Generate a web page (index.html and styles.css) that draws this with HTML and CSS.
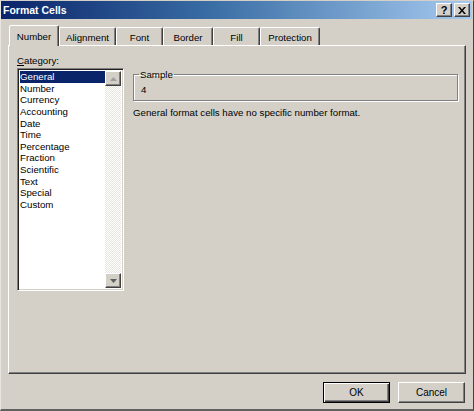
FILE: index.html
```html
<!DOCTYPE html>
<html>
<head>
<meta charset="utf-8">
<link rel="stylesheet" href="styles.css">
</head>
<body>
<div class="window">
  <div class="titlebar">
    <span class="title">Format Cells</span>
    <div class="tbtns">
      <span class="tbtn help">?</span>
      <span class="tbtn close"><svg width="8" height="7" viewBox="0 0 8 7"><path d="M0 0h2l2 2.5L6 0h2L5 3.5 8 7H6L4 4.5 2 7H0l3-3.5z" fill="#000"/></svg></span>
    </div>
  </div>
  <div class="tabs">
    <span class="tab active">Number</span>
    <span class="tab t-align">Alignment</span>
    <span class="tab t-font">Font</span>
    <span class="tab t-border">Border</span>
    <span class="tab t-fill">Fill</span>
    <span class="tab t-prot">Protection</span>
  </div>
  <div class="panel">
    <div class="leftcol">
      <div class="label"><u>C</u>ategory:</div>
      <div class="listbox">
        <div class="items">
          <div class="item sel">General</div>
          <div class="item">Number</div>
          <div class="item">Currency</div>
          <div class="item">Accounting</div>
          <div class="item">Date</div>
          <div class="item">Time</div>
          <div class="item">Percentage</div>
          <div class="item">Fraction</div>
          <div class="item">Scientific</div>
          <div class="item">Text</div>
          <div class="item">Special</div>
          <div class="item">Custom</div>
        </div>
        <div class="scroll">
          <div class="sbtn up"><svg width="7" height="4" viewBox="0 0 7 4"><path d="M3.5 0L7 4H0z" fill="#a0a0a0"/></svg></div>
          <div class="track"></div>
          <div class="sbtn down"><svg width="7" height="4" viewBox="0 0 7 4"><path d="M0 0h7L3.5 4z" fill="#606060"/></svg></div>
        </div>
      </div>
    </div>
    <div class="rightcol">
      <fieldset class="sample">
        <legend>Sample</legend>
        <div class="sval">4</div>
      </fieldset>
      <div class="desc">General format cells have no specific number format.</div>
    </div>
  </div>
  <div class="footer">
    <button class="btn default">OK</button>
    <button class="btn">Cancel</button>
  </div>
</div>
</body>
</html>
```
FILE: styles.css
```css
html, body {
  margin: 0;
  padding: 0;
  background: #d4d0c8;
}
body {
  font-family: "Liberation Sans", Arial, sans-serif;
  font-size: 9.7px;
  color: #000;
}
.window {
  width: 474px;
  height: 411px;
  box-sizing: border-box;
  background: #d4d0c8;
  border-top: 1px solid #d4d0c8;
  border-left: 1px solid #e8e6e0;
  border-right: 1px solid #404040;
  border-bottom: 2px solid #606060;
  display: flex;
  flex-direction: column;
}
.titlebar {
  height: 18px;
  margin: 0 1px 0 0;
  background: linear-gradient(to right, #0a246a 0%, #3a6ea5 45%, #a6caf0 100%);
  display: flex;
  align-items: center;
  justify-content: space-between;
  padding: 0 2px 0 2px;
}
.title {
  color: #fff;
  font-weight: bold;
  font-size: 10.5px;
}
.tbtns {
  display: flex;
  gap: 2px;
}
.tbtn {
  width: 16px;
  height: 14px;
  box-sizing: border-box;
  background: #d4d0c8;
  border-top: 1px solid #fff;
  border-left: 1px solid #fff;
  border-right: 1px solid #404040;
  border-bottom: 1px solid #404040;
  box-shadow: inset -1px -1px 0 #808080;
  display: flex;
  align-items: center;
  justify-content: center;
  font-weight: bold;
  font-size: 11px;
  line-height: 1;
}
.tabs {
  display: flex;
  align-items: flex-end;
  margin: 6px 0 0 8px;
  height: 20px;
  position: relative;
  z-index: 1;
}
.tab {
  height: 18px;
  box-sizing: border-box;
  padding: 4px 0 0 0;
  text-align: center;
  border-top: 1px solid #fff;
  border-left: 1px solid #fff;
  border-right: 1px solid #404040;
  box-shadow: inset -1px 0 0 #808080;
  border-radius: 2px 2px 0 0;
  background: #d4d0c8;
}
.t-align { width: 57px; }
.t-font { width: 47px; }
.t-border { width: 50px; }
.t-fill { width: 47px; }
.t-prot { width: 60px; }
.tab.active {
  height: 21px;
  width: 50px;
  padding-top: 5px;
  margin-bottom: -1px;
  position: relative;
  z-index: 2;
}
.panel {
  margin: 0 7px 0 7px;
  height: 329px;
  box-sizing: border-box;
  border-top: 1px solid #fff;
  border-left: 1px solid #fff;
  border-right: 1px solid #404040;
  border-bottom: 1px solid #404040;
  box-shadow: inset -1px -1px 0 #808080;
  display: flex;
  padding: 8px 0 0 8px;
  gap: 9px;
}
.leftcol {
  display: flex;
  flex-direction: column;
}
.label {
  height: 13px;
  line-height: 13px;
  margin-bottom: 1px;
}
.listbox {
  width: 107px;
  height: 223px;
  box-sizing: border-box;
  border-top: 1px solid #808080;
  border-left: 1px solid #808080;
  border-right: 1px solid #fff;
  border-bottom: 1px solid #fff;
  box-shadow: inset 1px 1px 0 #202020, inset -1px -1px 0 #d4d0c8;
  background: #fff;
  display: flex;
  padding: 2px 2px 2px 2px;
}
.items {
  flex: 1;
  display: flex;
  flex-direction: column;
}
.item {
  height: 11.64px;
  line-height: 11.64px;
  padding-left: 0;
  white-space: nowrap;
}
.item.sel {
  background: #0a246a;
  color: #fff;
}
.scroll {
  width: 16px;
  display: flex;
  flex-direction: column;
}
.track {
  flex: 1;
  background: repeating-conic-gradient(#fff 0 25%, #e6e4de 0 50%) 0 0 / 2px 2px;
}
.sbtn {
  height: 15px;
  box-sizing: border-box;
  background: #d4d0c8;
  border-top: 1px solid #fff;
  border-left: 1px solid #fff;
  border-right: 1px solid #404040;
  border-bottom: 1px solid #404040;
  box-shadow: inset -1px -1px 0 #808080;
  display: flex;
  align-items: center;
  justify-content: center;
}
.rightcol {
  flex: 1;
  display: flex;
  flex-direction: column;
  padding-top: 15px;
  padding-right: 7px;
}
.sample {
  margin: 0;
  padding: 0 0 0 7px;
  border: 1px solid #808080;
  box-shadow: 1px 1px 0 #fff, inset 1px 1px 0 #fff;
  height: 32px;
  box-sizing: border-box;
}
.sample legend {
  padding: 0 1px;
  margin-left: -2px;
  line-height: 11px;
}
.sval {
  margin-top: 4px;
}
.desc {
  margin-top: 6px;
  white-space: nowrap;
}
.footer {
  display: flex;
  justify-content: flex-end;
  gap: 8px;
  margin: 8px 8px 0 0;
}
.btn {
  width: 67px;
  height: 21px;
  box-sizing: border-box;
  font-family: "Liberation Sans", Arial, sans-serif;
  font-size: 10px;
  color: #000;
  background: #d4d0c8;
  border-top: 1px solid #fff;
  border-left: 1px solid #fff;
  border-right: 1px solid #404040;
  border-bottom: 1px solid #404040;
  box-shadow: inset -1px -1px 0 #808080;
  padding: 0;
  border-radius: 0;
}
.btn.default {
  border: 1px solid #000;
  box-shadow: inset 1px 1px 0 #fff, inset -1px -1px 0 #404040, inset -2px -2px 0 #808080;
}
```
